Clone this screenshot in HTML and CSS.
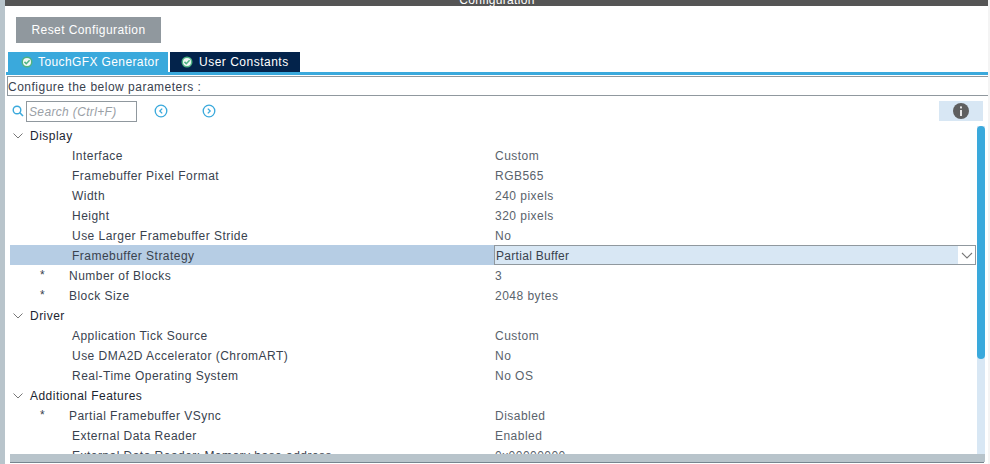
FILE: index.html
```html
<!DOCTYPE html>
<html lang="en">
<head>
<meta charset="utf-8">
<title>Configuration</title>
<link rel="stylesheet" href="styles.css">
</head>
<body>
<div class="strip"></div>
<main class="panel">
  <div class="titlebar"><span>Configuration</span></div>
  <div class="toolbar"><button class="reset">Reset Configuration</button></div>
  <div class="tabs">
    <div class="tab tab-active"><svg class="check" viewBox="0 0 12 12"><circle cx="6" cy="6" r="5.500" fill="#4fb283"/><circle cx="6" cy="6" r="4" fill="#f2f8f5"/><path d="M3.500 5.900 5.300 7.700 8.600 4.300" fill="none" stroke="#4fb283" stroke-width="1.600"/></svg>TouchGFX Generator</div>
    <div class="tab tab-dark"><svg class="check" viewBox="0 0 12 12"><circle cx="6" cy="6" r="5.500" fill="#4fb283"/><circle cx="6" cy="6" r="4" fill="#f2f8f5"/><path d="M3.500 5.900 5.300 7.700 8.600 4.300" fill="none" stroke="#4fb283" stroke-width="1.600"/></svg>User Constants</div>
  </div>
  <div class="caption">Configure the below parameters :</div>
  <div class="searchbar">
    <svg class="mag" viewBox="0 0 12 12"><circle cx="5" cy="5" r="3.800" fill="none" stroke="#3aa9dc" stroke-width="1.400"/><path d="M7.800 7.800 11 11" stroke="#3aa9dc" stroke-width="1.600"/></svg>
    <div class="search">Search (Ctrl+F)</div>
    <svg class="nav nav-prev" viewBox="0 0 14 14"><circle cx="7" cy="7" r="5.800" fill="none" stroke="#3aa9dc" stroke-width="1.300"/><path d="M8.200 4.600 5.800 7l2.400 2.400" fill="none" stroke="#3aa9dc" stroke-width="1.300"/></svg>
    <svg class="nav nav-next" viewBox="0 0 14 14"><circle cx="7" cy="7" r="5.800" fill="none" stroke="#3aa9dc" stroke-width="1.300"/><path d="M5.800 4.600 8.200 7l-2.400 2.400" fill="none" stroke="#3aa9dc" stroke-width="1.300"/></svg>
    <div class="info"><svg viewBox="0 0 16 16"><circle cx="8" cy="8" r="8" fill="#5f5f5f"/><rect x="7" y="7" width="2" height="6" fill="#e6e6e6"/><rect x="7" y="3.400" width="2" height="2" fill="#e6e6e6"/></svg></div>
  </div>
  <div class="body">
    <div class="tree">
      <div class="row group"><svg class="chev" viewBox="0 0 10 6"><path d="M.5.5 5 5 9.500.5" fill="none" stroke="#777" stroke-width="1"/></svg>Display</div>
      <div class="row"><span class="name">Interface</span><span class="val">Custom</span></div>
      <div class="row"><span class="name">Framebuffer Pixel Format</span><span class="val">RGB565</span></div>
      <div class="row"><span class="name">Width</span><span class="val">240 pixels</span></div>
      <div class="row"><span class="name">Height</span><span class="val">320 pixels</span></div>
      <div class="row"><span class="name">Use Larger Framebuffer Stride</span><span class="val">No</span></div>
      <div class="row row-selected"><span class="name">Framebuffer Strategy</span><div class="select"><span class="select-text">Partial Buffer</span><span class="select-arrow"><svg viewBox="0 0 12 7"><path d="M1 1l5 5 5-5" fill="none" stroke="#777" stroke-width="1.100"/></svg></span></div></div>
      <div class="row"><span class="star">*</span><span class="name name-star">Number of Blocks</span><span class="val">3</span></div>
      <div class="row"><span class="star">*</span><span class="name name-star">Block Size</span><span class="val">2048 bytes</span></div>
      <div class="row group"><svg class="chev" viewBox="0 0 10 6"><path d="M.5.5 5 5 9.500.5" fill="none" stroke="#777" stroke-width="1"/></svg>Driver</div>
      <div class="row"><span class="name">Application Tick Source</span><span class="val">Custom</span></div>
      <div class="row"><span class="name">Use DMA2D Accelerator (ChromART)</span><span class="val">No</span></div>
      <div class="row"><span class="name">Real-Time Operating System</span><span class="val">No OS</span></div>
      <div class="row group"><svg class="chev" viewBox="0 0 10 6"><path d="M.5.5 5 5 9.500.5" fill="none" stroke="#777" stroke-width="1"/></svg>Additional Features</div>
      <div class="row"><span class="star">*</span><span class="name name-star">Partial Framebuffer VSync</span><span class="val">Disabled</span></div>
      <div class="row"><span class="name">External Data Reader</span><span class="val">Enabled</span></div>
      <div class="row"><span class="name">External Data Reader: Memory base address</span><span class="val">0x00000000</span></div>
    </div>
    <div class="scrollbar"><div class="thumb"></div></div>
  </div>
  <div class="hbar"></div>
  <div class="footer"></div>
</main>
<div class="rightstrip"></div>
</body>
</html>
```
FILE: styles.css
```css
* { box-sizing: border-box; }
html, body { margin: 0; height: 100%; overflow: hidden; background: #fff; }
body {
  width: 990px; height: 464px;
  font: 12px "Liberation Sans", Arial, sans-serif;
  color: #39424e;
  letter-spacing: .47px;
  display: flex;
}
.strip { width: 5px; background: #b8c4cb; flex: none; }
.rightstrip { width: 2px; background: #f4f4f4; flex: none; }
.panel { flex: 1; min-width: 0; display: flex; flex-direction: column; }
.titlebar {
  height: 6px; margin-right: -2px; background: #555; color: #fff; overflow: hidden;
  text-align: center; line-height: 0; flex: none; padding-right: 1px; letter-spacing: .3px;
}
.titlebar span { display: inline-block; line-height: 0; }
.toolbar { height: 46px; padding: 11px 0 0 11px; flex: none; }
.reset {
  width: 145px; height: 26px; border: 0; background: #90989e; color: #fff;
  font: inherit; letter-spacing: .42px; padding: 0;
}
.tabs {
  display: flex; height: 23px; flex: none; margin: 0 -2px 1px 1px; padding-left: 2px;
  border-bottom: 3px solid #3aa9dc; gap: 2px;
}
.tab { height: 20px; display: flex; align-items: center; color: #fff; letter-spacing: .39px; }
.tab-active { width: 160px; background: #3aa9dc; padding-left: 13px; }
.tab-dark { width: 130px; background: #03234b; padding-left: 11px; letter-spacing: .5px; }
.check { width: 12px; height: 12px; margin: -1px 6px 0 0; }
.tab-active .check { margin-right: 5px; }
.caption {
  height: 20px; margin: 0 -1px 0 2px; flex: none; border: 1px solid #90989e;
  line-height: 20px; letter-spacing: .5px;
}
.searchbar { height: 29px; display: flex; align-items: center; flex: none; padding: 1px 0 0 7px; }
.mag { width: 12px; height: 12px; margin-right: 2px; }
.search {
  width: 111px; height: 21px; border: 1px solid #90989e; color: #9aa0a6;
  font-style: italic; line-height: 20px; padding-left: 2px; letter-spacing: .35px;
}
.nav { width: 14px; height: 14px; }
.nav-prev { margin-left: 17px; }
.nav-next { margin-left: 34px; }
.info {
  margin-left: auto; margin-right: 5px; width: 44px; height: 20px; background: #d8e7f4;
  display: flex; align-items: center; justify-content: center;
}
.info svg { width: 16px; height: 16px; }
.body { flex: 1; min-height: 0; display: flex; overflow: hidden; padding: 0 3px 0 5px; }
.tree { flex: 1; min-width: 0; }
.scrollbar { width: 8px; margin: 1px 0 0 1px; background: #d8e7f4; }
.thumb { height: 233px; background: #3aa9dc; border-radius: 4px; }
.row { height: 20px; padding-top: 2px; display: flex; align-items: center; position: relative; line-height: 18px; }
.group { color: #1c2530; padding-left: 3px; }
.chev { width: 10px; height: 6px; margin-right: 7px; }
.name { width: 422px; margin-left: 62px; flex: none; }
.name-star { margin-left: 59px; width: 425px; }
.star { position: absolute; left: 30px; top: 1px; }
.val { color: #5a636c; margin-left: 1px; }
.row-selected { background: linear-gradient(#b6cde4, #b6cde4) left / 484px 100% no-repeat; }
.select {
  flex: 1; height: 20px; margin-top: -2px; border: 1px solid #90989e; background: #d8e7f4;
  display: flex; line-height: 20px; min-width: 0;
}
.select-text { flex: 1; padding-left: 1px; letter-spacing: .3px; }
.select-arrow { width: 17px; background: #fff; display: flex; align-items: center; justify-content: center; }
.select-arrow svg { width: 12px; height: 7px; }
.hbar { height: 8px; margin: 0 3px 0 5px; background: #b8c4cb; flex: none; }
.footer { height: 2px; margin: 0 4px 0 5px; border-top: 1px solid #77858f; flex: none; }
```
